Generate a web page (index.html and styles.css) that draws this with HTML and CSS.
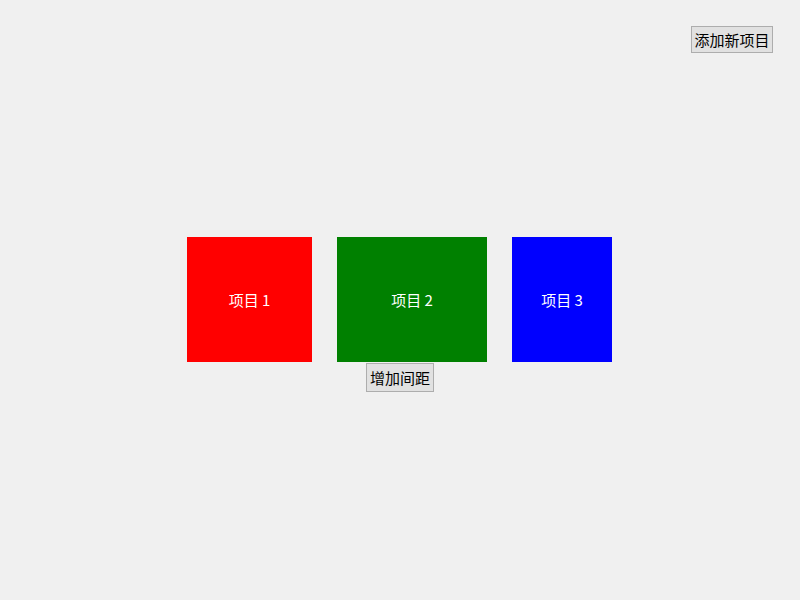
FILE: index.html
```html
<!DOCTYPE html>
<html lang="zh">
<head>
<meta charset="utf-8">
<title>布局</title>
<link rel="stylesheet" href="styles.css">
</head>
<body>
<div class="page">
  <div class="top">
    <button class="btn btn-add">添加新项目</button>
  </div>
  <div class="row">
    <div class="item red">项目 1</div>
    <div class="item green">项目 2</div>
    <div class="item blue">项目 3</div>
  </div>
  <div class="bottom">
    <button class="btn btn-space">增加间距</button>
  </div>
</div>
</body>
</html>
```
FILE: styles.css
```css
html, body {
  margin: 0;
  padding: 0;
  background: #f0f0f0;
}
body {
  font-family: "Noto Sans CJK SC", "Noto Sans", sans-serif;
}
.page {
  height: 100vh;
  display: grid;
  grid-template-rows: 237px auto 1fr;
}
.top {
  display: flex;
  justify-content: flex-end;
  align-items: flex-start;
  padding: 26px 27px 0 0;
}
.row {
  display: flex;
  justify-content: center;
  gap: 25px;
  padding-right: 1px;
}
.item {
  height: 125px;
  display: flex;
  align-items: center;
  justify-content: center;
  color: #ffffff;
  font-size: 15px;
}
.red { width: 125px; background: #ff0000; }
.green { width: 150px; background: #008000; }
.blue { width: 100px; background: #0000ff; }
.bottom {
  display: flex;
  justify-content: center;
  align-items: flex-start;
  padding-top: 1px;
}
.btn {
  font-family: "Noto Sans CJK SC", "Noto Sans", sans-serif;
  font-size: 15px;
  color: #000;
  background: #e1e1e1;
  border: 1px solid #adadad;
  border-radius: 0;
  padding: 0;
  margin: 0;
  line-height: 1;
  white-space: nowrap;
  box-sizing: border-box;
}
.btn-add { width: 82px; height: 27px; }
.btn-space { width: 68px; height: 29px; }
```
